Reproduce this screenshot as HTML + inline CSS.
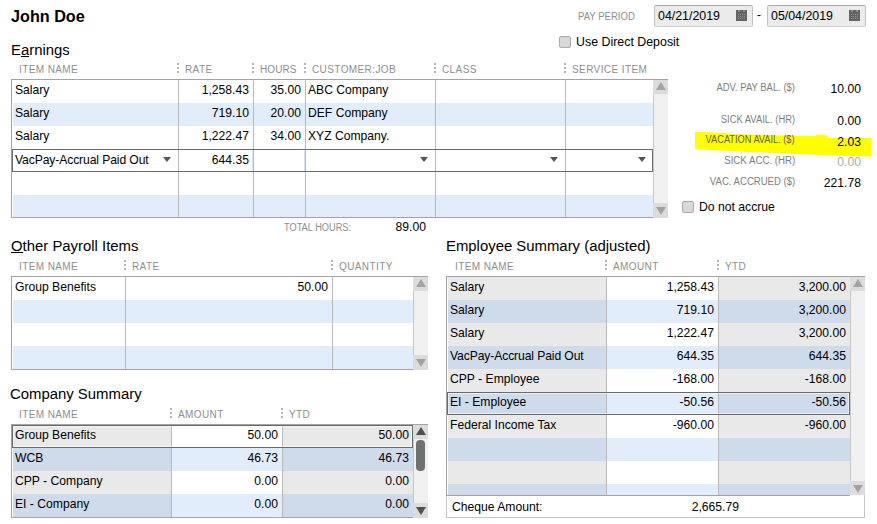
<!DOCTYPE html><html><head><meta charset="utf-8"><style>
html,body{margin:0;padding:0}
body{width:877px;height:524px;position:relative;overflow:hidden;background:#fff;font-family:"Liberation Sans",sans-serif;color:#000}
.t{position:absolute;white-space:nowrap;line-height:1}
.r{position:absolute;box-sizing:border-box}
</style></head><body>
<div class="t" style="left:11px;top:8px;font-size:16.2px;font-weight:bold;">John Doe</div>
<div class="t" style="left:578px;top:12px;font-size:10px;color:#8e8e8e;transform:scaleX(0.956);transform-origin:left 50%;">PAY PERIOD</div>
<div class="r" style="left:654px;top:5px;width:99px;height:22px;background:#ebebeb;border:1px solid #c2c2c2;border-top-color:#a8a8a8;border-bottom-color:#d2d2d2;border-radius:2px;"></div>
<div class="t" style="left:658px;top:10px;font-size:12.4px;">04/21/2019</div>
<div class="r" style="left:736px;top:10px;width:11px;height:11px;background:#646464;"></div>
<div class="r" style="left:738px;top:10px;width:2px;height:2px;background:#8a8a8a;"></div>
<div class="r" style="left:743px;top:10px;width:2px;height:2px;background:#8a8a8a;"></div>
<div class="r" style="left:738px;top:14px;width:1px;height:1px;background:#8e8e8e;"></div>
<div class="r" style="left:740px;top:14px;width:1px;height:1px;background:#8e8e8e;"></div>
<div class="r" style="left:742px;top:14px;width:1px;height:1px;background:#8e8e8e;"></div>
<div class="r" style="left:744px;top:14px;width:1px;height:1px;background:#8e8e8e;"></div>
<div class="r" style="left:738px;top:16px;width:1px;height:1px;background:#8e8e8e;"></div>
<div class="r" style="left:740px;top:16px;width:1px;height:1px;background:#8e8e8e;"></div>
<div class="r" style="left:742px;top:16px;width:1px;height:1px;background:#8e8e8e;"></div>
<div class="r" style="left:744px;top:16px;width:1px;height:1px;background:#8e8e8e;"></div>
<div class="r" style="left:738px;top:18px;width:1px;height:1px;background:#8e8e8e;"></div>
<div class="r" style="left:740px;top:18px;width:1px;height:1px;background:#8e8e8e;"></div>
<div class="r" style="left:742px;top:18px;width:1px;height:1px;background:#8e8e8e;"></div>
<div class="r" style="left:744px;top:18px;width:1px;height:1px;background:#8e8e8e;"></div>
<div class="r" style="left:767px;top:5px;width:99px;height:22px;background:#ebebeb;border:1px solid #c2c2c2;border-top-color:#a8a8a8;border-bottom-color:#d2d2d2;border-radius:2px;"></div>
<div class="t" style="left:771px;top:10px;font-size:12.4px;">05/04/2019</div>
<div class="r" style="left:849px;top:10px;width:11px;height:11px;background:#646464;"></div>
<div class="r" style="left:851px;top:10px;width:2px;height:2px;background:#8a8a8a;"></div>
<div class="r" style="left:856px;top:10px;width:2px;height:2px;background:#8a8a8a;"></div>
<div class="r" style="left:851px;top:14px;width:1px;height:1px;background:#8e8e8e;"></div>
<div class="r" style="left:853px;top:14px;width:1px;height:1px;background:#8e8e8e;"></div>
<div class="r" style="left:855px;top:14px;width:1px;height:1px;background:#8e8e8e;"></div>
<div class="r" style="left:857px;top:14px;width:1px;height:1px;background:#8e8e8e;"></div>
<div class="r" style="left:851px;top:16px;width:1px;height:1px;background:#8e8e8e;"></div>
<div class="r" style="left:853px;top:16px;width:1px;height:1px;background:#8e8e8e;"></div>
<div class="r" style="left:855px;top:16px;width:1px;height:1px;background:#8e8e8e;"></div>
<div class="r" style="left:857px;top:16px;width:1px;height:1px;background:#8e8e8e;"></div>
<div class="r" style="left:851px;top:18px;width:1px;height:1px;background:#8e8e8e;"></div>
<div class="r" style="left:853px;top:18px;width:1px;height:1px;background:#8e8e8e;"></div>
<div class="r" style="left:855px;top:18px;width:1px;height:1px;background:#8e8e8e;"></div>
<div class="r" style="left:857px;top:18px;width:1px;height:1px;background:#8e8e8e;"></div>
<div class="t" style="left:757px;top:9px;font-size:12px;">-</div>
<div class="r" style="left:559px;top:36px;width:12px;height:12px;background:#d9d9d9;border:1px solid #ababab;border-radius:2px;"></div>
<div class="t" style="left:576px;top:36px;font-size:12.4px;">Use Direct Deposit</div>
<div class="t" style="left:11px;top:43px;font-size:14.9px;">Earnings</div>
<div class="r" style="left:21px;top:56px;width:8px;height:1px;background:#000;"></div>
<div class="t" style="left:19px;top:65px;font-size:10px;color:#8e8e8e;letter-spacing:0.4px;">ITEM NAME</div>
<div class="r" style="left:177px;top:63px;width:2px;height:2px;background:#b4b4b4;"></div>
<div class="r" style="left:177px;top:67px;width:2px;height:2px;background:#b4b4b4;"></div>
<div class="r" style="left:177px;top:71px;width:2px;height:2px;background:#b4b4b4;"></div>
<div class="t" style="left:185px;top:65px;font-size:10px;color:#8e8e8e;letter-spacing:0.4px;">RATE</div>
<div class="r" style="left:252px;top:63px;width:2px;height:2px;background:#b4b4b4;"></div>
<div class="r" style="left:252px;top:67px;width:2px;height:2px;background:#b4b4b4;"></div>
<div class="r" style="left:252px;top:71px;width:2px;height:2px;background:#b4b4b4;"></div>
<div class="t" style="left:260px;top:65px;font-size:10px;color:#8e8e8e;letter-spacing:0.1px;">HOURS</div>
<div class="r" style="left:304px;top:63px;width:2px;height:2px;background:#b4b4b4;"></div>
<div class="r" style="left:304px;top:67px;width:2px;height:2px;background:#b4b4b4;"></div>
<div class="r" style="left:304px;top:71px;width:2px;height:2px;background:#b4b4b4;"></div>
<div class="t" style="left:312px;top:65px;font-size:10px;color:#8e8e8e;letter-spacing:0.4px;">CUSTOMER:JOB</div>
<div class="r" style="left:434px;top:63px;width:2px;height:2px;background:#b4b4b4;"></div>
<div class="r" style="left:434px;top:67px;width:2px;height:2px;background:#b4b4b4;"></div>
<div class="r" style="left:434px;top:71px;width:2px;height:2px;background:#b4b4b4;"></div>
<div class="t" style="left:442px;top:65px;font-size:10px;color:#8e8e8e;letter-spacing:0.4px;">CLASS</div>
<div class="r" style="left:564px;top:63px;width:2px;height:2px;background:#b4b4b4;"></div>
<div class="r" style="left:564px;top:67px;width:2px;height:2px;background:#b4b4b4;"></div>
<div class="r" style="left:564px;top:71px;width:2px;height:2px;background:#b4b4b4;"></div>
<div class="t" style="left:572px;top:65px;font-size:10px;color:#8e8e8e;letter-spacing:0.4px;">SERVICE ITEM</div>
<div class="r" style="left:13px;top:80px;width:640px;height:23px;background:#fff;"></div>
<div class="r" style="left:13px;top:103px;width:640px;height:23px;background:#e2edfc;"></div>
<div class="r" style="left:13px;top:126px;width:640px;height:23px;background:#fff;"></div>
<div class="r" style="left:13px;top:149px;width:640px;height:23px;background:#fff;"></div>
<div class="r" style="left:13px;top:172px;width:640px;height:23px;background:#fff;"></div>
<div class="r" style="left:13px;top:195px;width:640px;height:22px;background:#e2edfc;"></div>
<div class="r" style="left:11px;top:79px;width:657px;height:1px;background:#a3a3a3;"></div>
<div class="r" style="left:11px;top:79px;width:1px;height:139px;background:#a3a3a3;"></div>
<div class="r" style="left:11px;top:217px;width:642px;height:1px;background:#a3a3a3;"></div>
<div class="r" style="left:178px;top:80px;width:1px;height:137px;background:#b9b9b9;"></div>
<div class="r" style="left:253px;top:80px;width:1px;height:137px;background:#b9b9b9;"></div>
<div class="r" style="left:305px;top:80px;width:1px;height:137px;background:#b9b9b9;"></div>
<div class="r" style="left:435px;top:80px;width:1px;height:137px;background:#b9b9b9;"></div>
<div class="r" style="left:565px;top:80px;width:1px;height:137px;background:#b9b9b9;"></div>
<div class="r" style="left:12px;top:149px;width:641px;height:23px;box-shadow:inset 0 0 0 1px #6a6a6a;"></div>
<div class="r" style="left:252px;top:150px;width:1px;height:21px;background:#d6e4f6;"></div>
<div class="r" style="left:304px;top:150px;width:1px;height:21px;background:#d6e4f6;"></div>
<div class="r" style="left:653px;top:80px;width:15px;height:138px;background:#f0f0f0;"></div>
<div class="r" style="left:653px;top:94px;width:1px;height:110px;background:#c8c8c8;"></div>
<div class="r" style="left:653px;top:80px;width:15px;height:14px;background:#dcdcdc;"></div>
<div class="r" style="left:653px;top:203px;width:15px;height:15px;background:#dcdcdc;"></div>
<div class="r" style="left:656px;top:82px;width:0;height:0;border-left:5.0px solid transparent;border-right:5.0px solid transparent;border-bottom:8px solid #a3a3a3;"></div>
<div class="r" style="left:656px;top:207px;width:0;height:0;border-left:5.0px solid transparent;border-right:5.0px solid transparent;border-top:8px solid #a3a3a3;"></div>
<div class="t" style="left:15px;top:84px;font-size:12.15px;">Salary</div>
<div class="t" style="right:628px;top:84px;font-size:12.15px;">1,258.43</div>
<div class="t" style="right:576px;top:84px;font-size:12.15px;">35.00</div>
<div class="t" style="left:308px;top:84px;font-size:12.15px;">ABC Company</div>
<div class="t" style="left:15px;top:107px;font-size:12.15px;">Salary</div>
<div class="t" style="right:628px;top:107px;font-size:12.15px;">719.10</div>
<div class="t" style="right:576px;top:107px;font-size:12.15px;">20.00</div>
<div class="t" style="left:308px;top:107px;font-size:12.15px;">DEF Company</div>
<div class="t" style="left:15px;top:130px;font-size:12.15px;">Salary</div>
<div class="t" style="right:628px;top:130px;font-size:12.15px;">1,222.47</div>
<div class="t" style="right:576px;top:130px;font-size:12.15px;">34.00</div>
<div class="t" style="left:308px;top:130px;font-size:12.15px;">XYZ Company.</div>
<div class="t" style="left:15px;top:154px;font-size:12.15px;letter-spacing:-0.11px;">VacPay-Accrual Paid Out</div>
<div class="t" style="right:628px;top:154px;font-size:12.15px;">644.35</div>
<div class="r" style="left:163px;top:157px;width:0;height:0;border-left:4.0px solid transparent;border-right:4.0px solid transparent;border-top:5px solid #555;"></div>
<div class="r" style="left:420px;top:157px;width:0;height:0;border-left:4.0px solid transparent;border-right:4.0px solid transparent;border-top:5px solid #555;"></div>
<div class="r" style="left:550px;top:157px;width:0;height:0;border-left:4.0px solid transparent;border-right:4.0px solid transparent;border-top:5px solid #555;"></div>
<div class="r" style="left:638px;top:157px;width:0;height:0;border-left:4.0px solid transparent;border-right:4.0px solid transparent;border-top:5px solid #555;"></div>
<div class="t" style="left:284px;top:223px;font-size:10px;color:#8e8e8e;transform:scaleX(0.924);transform-origin:left 50%;">TOTAL HOURS:</div>
<div class="t" style="right:451px;top:221px;font-size:12.15px;">89.00</div>
<svg class="r" style="left:0;top:0" width="877" height="524"><polygon points="695,132 702,132 720,133 737,134 764,135 780,135.5 814,136 818,134.8 826,135.2 829,138 871,138 871,156.5 830,155.5 808,154.5 780,153.2 731,151.2 695,149" fill="#ffff00"/></svg>
<div class="t" style="right:82px;top:83px;font-size:10px;color:#7e7e7e;transform:scaleX(0.946);transform-origin:right 50%;">ADV. PAY BAL. ($)</div>
<div class="t" style="right:16px;top:83px;font-size:12.15px;">10.00</div>
<div class="t" style="right:82px;top:115px;font-size:10px;color:#7e7e7e;transform:scaleX(0.94);transform-origin:right 50%;">SICK AVAIL. (HR)</div>
<div class="t" style="right:16px;top:115px;font-size:12.15px;">0.00</div>
<div class="t" style="right:82px;top:135px;font-size:10px;color:#5e5e2e;transform:scaleX(0.921);transform-origin:right 50%;">VACATION AVAIL. ($)</div>
<div class="t" style="right:16px;top:136px;font-size:12.15px;">2.03</div>
<div class="t" style="right:82px;top:156px;font-size:10px;color:#7e7e7e;transform:scaleX(0.97);transform-origin:right 50%;">SICK ACC. (HR)</div>
<div class="t" style="right:16px;top:156px;font-size:12.15px;color:#adadad;">0.00</div>
<div class="t" style="right:82px;top:177px;font-size:10px;color:#7e7e7e;transform:scaleX(0.957);transform-origin:right 50%;">VAC. ACCRUED ($)</div>
<div class="t" style="right:16px;top:177px;font-size:12.15px;">221.78</div>
<div class="r" style="left:682px;top:201px;width:12px;height:12px;background:#d9d9d9;border:1px solid #ababab;border-radius:2px;"></div>
<div class="t" style="left:699px;top:201px;font-size:12.2px;">Do not accrue</div>
<div class="t" style="left:11px;top:239px;font-size:14.9px;">Other Payroll Items</div>
<div class="r" style="left:11px;top:252px;width:12px;height:1px;background:#000;"></div>
<div class="t" style="left:19px;top:262px;font-size:10px;color:#8e8e8e;letter-spacing:0.4px;">ITEM NAME</div>
<div class="r" style="left:124px;top:260px;width:2px;height:2px;background:#b4b4b4;"></div>
<div class="r" style="left:124px;top:264px;width:2px;height:2px;background:#b4b4b4;"></div>
<div class="r" style="left:124px;top:268px;width:2px;height:2px;background:#b4b4b4;"></div>
<div class="t" style="left:132px;top:262px;font-size:10px;color:#8e8e8e;letter-spacing:0.4px;">RATE</div>
<div class="r" style="left:331px;top:260px;width:2px;height:2px;background:#b4b4b4;"></div>
<div class="r" style="left:331px;top:264px;width:2px;height:2px;background:#b4b4b4;"></div>
<div class="r" style="left:331px;top:268px;width:2px;height:2px;background:#b4b4b4;"></div>
<div class="t" style="left:339px;top:262px;font-size:10px;color:#8e8e8e;letter-spacing:0.4px;">QUANTITY</div>
<div class="r" style="left:13px;top:277px;width:400px;height:23px;background:#fff;"></div>
<div class="r" style="left:13px;top:300px;width:400px;height:23px;background:#e2edfc;"></div>
<div class="r" style="left:13px;top:323px;width:400px;height:23px;background:#fff;"></div>
<div class="r" style="left:13px;top:346px;width:400px;height:23px;background:#e2edfc;"></div>
<div class="r" style="left:11px;top:276px;width:417px;height:1px;background:#a3a3a3;"></div>
<div class="r" style="left:11px;top:276px;width:1px;height:94px;background:#a3a3a3;"></div>
<div class="r" style="left:11px;top:369px;width:402px;height:1px;background:#a3a3a3;"></div>
<div class="r" style="left:125px;top:277px;width:1px;height:92px;background:#b9b9b9;"></div>
<div class="r" style="left:332px;top:277px;width:1px;height:92px;background:#b9b9b9;"></div>
<div class="r" style="left:413px;top:277px;width:15px;height:93px;background:#f0f0f0;"></div>
<div class="r" style="left:413px;top:291px;width:1px;height:65px;background:#c8c8c8;"></div>
<div class="r" style="left:413px;top:277px;width:15px;height:14px;background:#dcdcdc;"></div>
<div class="r" style="left:413px;top:355px;width:15px;height:15px;background:#dcdcdc;"></div>
<div class="r" style="left:416px;top:279px;width:0;height:0;border-left:5.0px solid transparent;border-right:5.0px solid transparent;border-bottom:8px solid #a3a3a3;"></div>
<div class="r" style="left:416px;top:359px;width:0;height:0;border-left:5.0px solid transparent;border-right:5.0px solid transparent;border-top:8px solid #a3a3a3;"></div>
<div class="t" style="left:15px;top:281px;font-size:12.15px;">Group Benefits</div>
<div class="t" style="right:549px;top:281px;font-size:12.15px;">50.00</div>
<div class="t" style="left:10px;top:387px;font-size:14.9px;">Company Summary</div>
<div class="t" style="left:19px;top:410px;font-size:10px;color:#8e8e8e;letter-spacing:0.4px;">ITEM NAME</div>
<div class="r" style="left:170px;top:408px;width:2px;height:2px;background:#b4b4b4;"></div>
<div class="r" style="left:170px;top:412px;width:2px;height:2px;background:#b4b4b4;"></div>
<div class="r" style="left:170px;top:416px;width:2px;height:2px;background:#b4b4b4;"></div>
<div class="t" style="left:178px;top:410px;font-size:10px;color:#8e8e8e;letter-spacing:0.4px;">AMOUNT</div>
<div class="r" style="left:281px;top:408px;width:2px;height:2px;background:#b4b4b4;"></div>
<div class="r" style="left:281px;top:412px;width:2px;height:2px;background:#b4b4b4;"></div>
<div class="r" style="left:281px;top:416px;width:2px;height:2px;background:#b4b4b4;"></div>
<div class="t" style="left:289px;top:410px;font-size:10px;color:#8e8e8e;letter-spacing:0.4px;">YTD</div>
<div class="r" style="left:13px;top:425px;width:158px;height:23px;background:#e9e9e9;"></div>
<div class="r" style="left:172px;top:425px;width:110px;height:23px;background:#fff;"></div>
<div class="r" style="left:283px;top:425px;width:130px;height:23px;background:#e9e9e9;"></div>
<div class="r" style="left:13px;top:448px;width:158px;height:23px;background:#cedbea;"></div>
<div class="r" style="left:172px;top:448px;width:110px;height:23px;background:#e2edfc;"></div>
<div class="r" style="left:283px;top:448px;width:130px;height:23px;background:#cedbea;"></div>
<div class="r" style="left:13px;top:471px;width:158px;height:23px;background:#e9e9e9;"></div>
<div class="r" style="left:172px;top:471px;width:110px;height:23px;background:#fff;"></div>
<div class="r" style="left:283px;top:471px;width:130px;height:23px;background:#e9e9e9;"></div>
<div class="r" style="left:13px;top:494px;width:158px;height:23px;background:#cedbea;"></div>
<div class="r" style="left:172px;top:494px;width:110px;height:23px;background:#e2edfc;"></div>
<div class="r" style="left:283px;top:494px;width:130px;height:23px;background:#cedbea;"></div>
<div class="r" style="left:11px;top:424px;width:417px;height:1px;background:#a3a3a3;"></div>
<div class="r" style="left:11px;top:424px;width:1px;height:94px;background:#a3a3a3;"></div>
<div class="r" style="left:11px;top:517px;width:403px;height:1px;background:#a3a3a3;"></div>
<div class="r" style="left:171px;top:425px;width:1px;height:92px;background:#b9b9b9;"></div>
<div class="r" style="left:282px;top:425px;width:1px;height:92px;background:#b9b9b9;"></div>
<div class="r" style="left:12px;top:425px;width:401px;height:23px;box-shadow:inset 0 0 0 1px #6a6a6a;"></div>
<div class="r" style="left:13px;top:426px;width:399px;height:21px;box-shadow:inset 0 0 0 1px rgba(255,255,255,0.55);"></div>
<div class="r" style="left:413px;top:425px;width:15px;height:93px;background:#f0f0f0;"></div>
<div class="r" style="left:413px;top:439px;width:1px;height:65px;background:#c8c8c8;"></div>
<div class="r" style="left:413px;top:425px;width:15px;height:14px;background:#dcdcdc;"></div>
<div class="r" style="left:413px;top:503px;width:15px;height:15px;background:#dcdcdc;"></div>
<div class="r" style="left:416px;top:427px;width:0;height:0;border-left:5.0px solid transparent;border-right:5.0px solid transparent;border-bottom:8px solid #4f4f4f;"></div>
<div class="r" style="left:416px;top:507px;width:0;height:0;border-left:5.0px solid transparent;border-right:5.0px solid transparent;border-top:8px solid #4f4f4f;"></div>
<div class="r" style="left:416px;top:440px;width:9px;height:31px;background:#6f7170;border-radius:4px;"></div>
<div class="t" style="left:15px;top:429px;font-size:12.15px;">Group Benefits</div>
<div class="t" style="right:599px;top:429px;font-size:12.15px;">50.00</div>
<div class="t" style="right:468px;top:429px;font-size:12.15px;">50.00</div>
<div class="t" style="left:15px;top:452px;font-size:12.15px;">WCB</div>
<div class="t" style="right:599px;top:452px;font-size:12.15px;">46.73</div>
<div class="t" style="right:468px;top:452px;font-size:12.15px;">46.73</div>
<div class="t" style="left:15px;top:475px;font-size:12.15px;">CPP - Company</div>
<div class="t" style="right:599px;top:475px;font-size:12.15px;">0.00</div>
<div class="t" style="right:468px;top:475px;font-size:12.15px;">0.00</div>
<div class="t" style="left:15px;top:498px;font-size:12.15px;">EI - Company</div>
<div class="t" style="right:599px;top:498px;font-size:12.15px;">0.00</div>
<div class="t" style="right:468px;top:498px;font-size:12.15px;">0.00</div>
<div class="t" style="left:446px;top:239px;font-size:14.9px;">Employee Summary (adjusted)</div>
<div class="t" style="left:455px;top:262px;font-size:10px;color:#8e8e8e;letter-spacing:0.4px;">ITEM NAME</div>
<div class="r" style="left:605px;top:260px;width:2px;height:2px;background:#b4b4b4;"></div>
<div class="r" style="left:605px;top:264px;width:2px;height:2px;background:#b4b4b4;"></div>
<div class="r" style="left:605px;top:268px;width:2px;height:2px;background:#b4b4b4;"></div>
<div class="t" style="left:613px;top:262px;font-size:10px;color:#8e8e8e;letter-spacing:0.4px;">AMOUNT</div>
<div class="r" style="left:717px;top:260px;width:2px;height:2px;background:#b4b4b4;"></div>
<div class="r" style="left:717px;top:264px;width:2px;height:2px;background:#b4b4b4;"></div>
<div class="r" style="left:717px;top:268px;width:2px;height:2px;background:#b4b4b4;"></div>
<div class="t" style="left:725px;top:262px;font-size:10px;color:#8e8e8e;letter-spacing:0.4px;">YTD</div>
<div class="r" style="left:448px;top:277px;width:158px;height:23px;background:#e9e9e9;"></div>
<div class="r" style="left:607px;top:277px;width:111px;height:23px;background:#fff;"></div>
<div class="r" style="left:719px;top:277px;width:131px;height:23px;background:#e9e9e9;"></div>
<div class="r" style="left:448px;top:300px;width:158px;height:23px;background:#cedbea;"></div>
<div class="r" style="left:607px;top:300px;width:111px;height:23px;background:#e2edfc;"></div>
<div class="r" style="left:719px;top:300px;width:131px;height:23px;background:#cedbea;"></div>
<div class="r" style="left:448px;top:323px;width:158px;height:23px;background:#e9e9e9;"></div>
<div class="r" style="left:607px;top:323px;width:111px;height:23px;background:#fff;"></div>
<div class="r" style="left:719px;top:323px;width:131px;height:23px;background:#e9e9e9;"></div>
<div class="r" style="left:448px;top:346px;width:158px;height:23px;background:#cedbea;"></div>
<div class="r" style="left:607px;top:346px;width:111px;height:23px;background:#e2edfc;"></div>
<div class="r" style="left:719px;top:346px;width:131px;height:23px;background:#cedbea;"></div>
<div class="r" style="left:448px;top:369px;width:158px;height:23px;background:#e9e9e9;"></div>
<div class="r" style="left:607px;top:369px;width:111px;height:23px;background:#fff;"></div>
<div class="r" style="left:719px;top:369px;width:131px;height:23px;background:#e9e9e9;"></div>
<div class="r" style="left:448px;top:392px;width:158px;height:23px;background:#cedbea;"></div>
<div class="r" style="left:607px;top:392px;width:111px;height:23px;background:#e2edfc;"></div>
<div class="r" style="left:719px;top:392px;width:131px;height:23px;background:#cedbea;"></div>
<div class="r" style="left:448px;top:415px;width:158px;height:23px;background:#e9e9e9;"></div>
<div class="r" style="left:607px;top:415px;width:111px;height:23px;background:#fff;"></div>
<div class="r" style="left:719px;top:415px;width:131px;height:23px;background:#e9e9e9;"></div>
<div class="r" style="left:448px;top:438px;width:158px;height:23px;background:#cedbea;"></div>
<div class="r" style="left:607px;top:438px;width:111px;height:23px;background:#e2edfc;"></div>
<div class="r" style="left:719px;top:438px;width:131px;height:23px;background:#cedbea;"></div>
<div class="r" style="left:448px;top:461px;width:158px;height:23px;background:#e9e9e9;"></div>
<div class="r" style="left:607px;top:461px;width:111px;height:23px;background:#fff;"></div>
<div class="r" style="left:719px;top:461px;width:131px;height:23px;background:#e9e9e9;"></div>
<div class="r" style="left:448px;top:484px;width:158px;height:11px;background:#cedbea;"></div>
<div class="r" style="left:607px;top:484px;width:111px;height:11px;background:#e2edfc;"></div>
<div class="r" style="left:719px;top:484px;width:131px;height:11px;background:#cedbea;"></div>
<div class="r" style="left:446px;top:276px;width:419px;height:1px;background:#a3a3a3;"></div>
<div class="r" style="left:446px;top:276px;width:1px;height:242px;background:#a3a3a3;"></div>
<div class="r" style="left:606px;top:277px;width:1px;height:218px;background:#b9b9b9;"></div>
<div class="r" style="left:718px;top:277px;width:1px;height:218px;background:#b9b9b9;"></div>
<div class="r" style="left:447px;top:392px;width:403px;height:23px;box-shadow:inset 0 0 0 1px #6a6a6a;"></div>
<div class="r" style="left:448px;top:393px;width:401px;height:21px;box-shadow:inset 0 0 0 1px rgba(255,255,255,0.55);"></div>
<div class="r" style="left:850px;top:277px;width:15px;height:219px;background:#f0f0f0;"></div>
<div class="r" style="left:850px;top:291px;width:1px;height:191px;background:#c8c8c8;"></div>
<div class="r" style="left:850px;top:277px;width:15px;height:14px;background:#dcdcdc;"></div>
<div class="r" style="left:850px;top:481px;width:15px;height:15px;background:#dcdcdc;"></div>
<div class="r" style="left:853px;top:279px;width:0;height:0;border-left:5.0px solid transparent;border-right:5.0px solid transparent;border-bottom:8px solid #a3a3a3;"></div>
<div class="r" style="left:853px;top:485px;width:0;height:0;border-left:5.0px solid transparent;border-right:5.0px solid transparent;border-top:8px solid #a3a3a3;"></div>
<div class="t" style="left:450px;top:281px;font-size:12.15px;">Salary</div>
<div class="t" style="right:163px;top:281px;font-size:12.15px;">1,258.43</div>
<div class="t" style="right:31px;top:281px;font-size:12.15px;">3,200.00</div>
<div class="t" style="left:450px;top:304px;font-size:12.15px;">Salary</div>
<div class="t" style="right:163px;top:304px;font-size:12.15px;">719.10</div>
<div class="t" style="right:31px;top:304px;font-size:12.15px;">3,200.00</div>
<div class="t" style="left:450px;top:327px;font-size:12.15px;">Salary</div>
<div class="t" style="right:163px;top:327px;font-size:12.15px;">1,222.47</div>
<div class="t" style="right:31px;top:327px;font-size:12.15px;">3,200.00</div>
<div class="t" style="left:450px;top:350px;font-size:12.15px;letter-spacing:-0.11px;">VacPay-Accrual Paid Out</div>
<div class="t" style="right:163px;top:350px;font-size:12.15px;">644.35</div>
<div class="t" style="right:31px;top:350px;font-size:12.15px;">644.35</div>
<div class="t" style="left:450px;top:373px;font-size:12.15px;">CPP - Employee</div>
<div class="t" style="right:163px;top:373px;font-size:12.15px;">-168.00</div>
<div class="t" style="right:31px;top:373px;font-size:12.15px;">-168.00</div>
<div class="t" style="left:450px;top:396px;font-size:12.15px;">EI - Employee</div>
<div class="t" style="right:163px;top:396px;font-size:12.15px;">-50.56</div>
<div class="t" style="right:31px;top:396px;font-size:12.15px;">-50.56</div>
<div class="t" style="left:450px;top:419px;font-size:12.15px;">Federal Income Tax</div>
<div class="t" style="right:163px;top:419px;font-size:12.15px;">-960.00</div>
<div class="t" style="right:31px;top:419px;font-size:12.15px;">-960.00</div>
<div class="r" style="left:446px;top:495px;width:419px;height:23px;background:#fff;"></div>
<div class="r" style="left:446px;top:495px;width:1px;height:23px;background:#c6c6c6;"></div>
<div class="r" style="left:864px;top:495px;width:1px;height:23px;background:#c6c6c6;"></div>
<div class="r" style="left:446px;top:517px;width:419px;height:1px;background:#c6c6c6;"></div>
<div class="r" style="left:446px;top:495px;width:404px;height:1px;background:#a3a3a3;"></div>
<div class="t" style="left:452px;top:501px;font-size:12.15px;">Cheque Amount:</div>
<div class="t" style="right:138px;top:501px;font-size:12.15px;">2,665.79</div>
</body></html>
